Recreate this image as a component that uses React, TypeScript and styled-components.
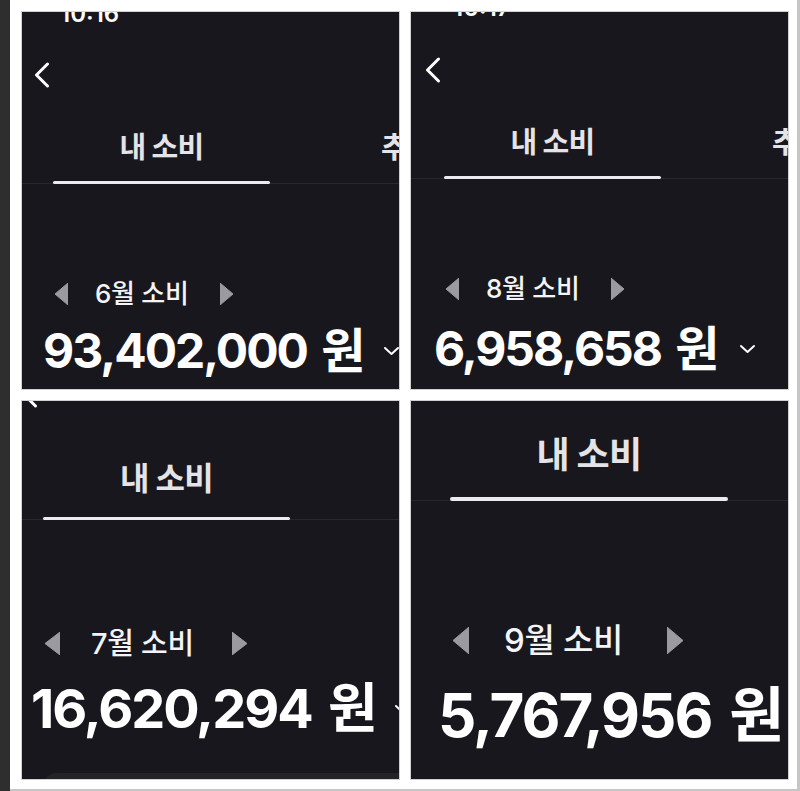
import React from 'react';
import styled, { createGlobalStyle } from 'styled-components';

const GlobalStyle = createGlobalStyle`
  body {
    margin: 0;
    background: #c6c6c6;
    font-family: "Inter", "Noto Sans CJK KR", sans-serif;
  }
`;

const Page = styled.div`
  display: flex;
  width: 800px;
  height: 791px;
  overflow: hidden;
`;

const Strip = styled.div`
  width: 10px;
  flex-shrink: 0;
  background: #2e2e2e;
`;

const Sheet = styled.div`
  width: 787px;
  height: 789px;
  box-sizing: border-box;
  padding: 12px 0 0 12px;
  background: #ffffff;
  display: grid;
  grid-template-columns: 377px 377px;
  grid-template-rows: 377px 378px;
  gap: 12px;
  align-content: start;
`;

const Panel = styled.div`
  background: #18171d;
  overflow: hidden;
  display: flex;
  flex-direction: column;
  align-items: flex-start;
  box-shadow: 0 0 0 1px rgba(0, 0, 0, 0.18);
`;

const StatusTime = styled.div<{ $top: number; $left: number; $size: number }>`
  margin-top: ${p => p.$top}px;
  padding-left: ${p => p.$left}px;
  font-family: "Inter", sans-serif;
  font-weight: 600;
  font-size: ${p => p.$size}px;
  line-height: 1;
  color: #ffffff;
  flex-shrink: 0;
`;

const BackButton = styled.div<{ $top: number; $left: number }>`
  margin-top: ${p => p.$top}px;
  margin-left: ${p => p.$left}px;
  width: 16px;
  height: 26px;
  flex-shrink: 0;
  svg {
    display: block;
  }
`;

const TabBar = styled.div<{ $top: number }>`
  align-self: stretch;
  display: flex;
  align-items: flex-end;
  margin-top: ${p => p.$top}px;
  border-bottom: 1px solid #28272d;
  flex-shrink: 0;
  white-space: nowrap;
`;

const Tab = styled.div<{ $left: number; $width: number }>`
  display: flex;
  flex-direction: column;
  align-items: center;
  width: ${p => p.$width}px;
  margin-left: ${p => p.$left}px;
  flex-shrink: 0;
`;

const TabLabel = styled.div<{ $size: number; $ls: number; $left?: number }>`
  font-family: "Noto Sans CJK KR", sans-serif;
  font-weight: 700;
  font-size: ${p => p.$size}px;
  line-height: 1;
  letter-spacing: ${p => p.$ls}px;
  color: #e4e4e8;
  white-space: nowrap;
  flex-shrink: 0;
  ${p => (p.$left !== undefined ? `margin-left: ${p.$left}px; align-self: flex-start;` : '')}
`;

const Underline = styled.div<{ $gap: number; $thick: number }>`
  width: 100%;
  height: ${p => p.$thick}px;
  margin-top: ${p => p.$gap}px;
  margin-bottom: -1px;
  border-radius: 2px;
  background: #ebebef;
`;

const MonthRow = styled.div<{ $top: number; $left: number; $height: number }>`
  display: flex;
  align-items: center;
  height: ${p => p.$height}px;
  margin-top: ${p => p.$top}px;
  margin-left: ${p => p.$left}px;
  flex-shrink: 0;
  white-space: nowrap;
  svg {
    display: block;
    flex-shrink: 0;
  }
`;

const MonthLabel = styled.div<{ $size: number; $gap1: number; $gap2: number }>`
  font-family: "Inter", "Noto Sans CJK KR", sans-serif;
  font-weight: 500;
  font-size: ${p => p.$size}px;
  line-height: 1;
  letter-spacing: -0.3px;
  color: #f4f4f6;
  margin: 0 ${p => p.$gap2}px 0 ${p => p.$gap1}px;
`;

const AmountRow = styled.div<{ $top: number; $left: number }>`
  display: flex;
  align-items: center;
  margin-top: ${p => p.$top}px;
  margin-left: ${p => p.$left}px;
  flex-shrink: 0;
  white-space: nowrap;
  svg {
    display: block;
    flex-shrink: 0;
  }
`;

const Amount = styled.div<{ $size: number }>`
  font-family: "Inter", "Noto Sans CJK KR", sans-serif;
  font-weight: 700;
  font-size: ${p => p.$size}px;
  line-height: 1;
  letter-spacing: -2px;
  color: #ffffff;
`;

const Won = styled.span`
  margin-left: 0.3em;
  letter-spacing: 0;
`;

const Caret = styled.div<{ $gap: number }>`
  margin-left: ${p => p.$gap}px;
`;

const BottomCard = styled.div<{ $top: number; $left: number }>`
  align-self: stretch;
  height: 40px;
  margin-top: ${p => p.$top}px;
  margin-left: ${p => p.$left}px;
  border-radius: 18px 0 0 0;
  background: #242328;
  flex-shrink: 0;
`;

type Spec = {
  time?: { text: string; top: number; left: number; size: number };
  back?: { top: number; left: number };
  tab: { top: number; left: number; width: number; size: number; ls: number; gap: number; thick: number; second: number };
  month: { top: number; left: number; height: number; size: number; tw: number; th: number; gap1: number; gap2: number; label: string };
  amount: { top: number; left: number; size: number; value: string; caretGap: number };
  card?: { top: number; left: number };
};

const panels: Spec[] = [
  {
    time: { text: '10:16', top: -10, left: 38, size: 24 },
    back: { top: 36, left: 12 },
    tab: { top: 43, left: 31, width: 217, size: 29, ls: -0.6, gap: 21, thick: 3, second: 111 },
    month: { top: 95, left: 33, height: 30, size: 26, tw: 13, th: 22, gap1: 27, gap2: 31, label: '6월 소비' },
    amount: { top: 18, left: 21, size: 48, value: '93,402,000', caretGap: 17 },
  },
  {
    time: { text: '10:17', top: -16, left: 42, size: 24 },
    back: { top: 37, left: 14 },
    tab: { top: 43, left: 33, width: 217, size: 29, ls: -0.6, gap: 21, thick: 3, second: 111 },
    month: { top: 95, left: 35, height: 30, size: 26, tw: 13, th: 22, gap1: 27, gap2: 31, label: '8월 소비' },
    amount: { top: 21, left: 23, size: 48, value: '6,958,658', caretGap: 19 },
  },
  {
    back: { top: -19, left: 0 },
    tab: { top: 52, left: 21, width: 247, size: 32, ls: -0.6, gap: 25, thick: 3, second: 124 },
    month: { top: 107, left: 23, height: 33, size: 29, tw: 15, th: 23, gap1: 31, gap2: 38, label: '7월 소비' },
    amount: { top: 22, left: 9, size: 54, value: '16,620,294', caretGap: 16 },
    card: { top: 37, left: 18 },
  },
  {
    tab: { top: 33, left: 39, width: 278, size: 36, ls: -0.6, gap: 27, thick: 4, second: 139 },
    month: { top: 121, left: 42, height: 37, size: 33, tw: 16, th: 27, gap1: 35, gap2: 44, label: '9월 소비' },
    amount: { top: 26, left: 27, size: 60, value: '5,767,956', caretGap: 26 },
  },
];

const BackIcon = () => (
  <svg width="16" height="26" viewBox="0 0 16 26">
    <path d="M13.5 2 L2.5 13 L13.5 24" stroke="#ffffff" strokeWidth="3" fill="none" strokeLinecap="round" strokeLinejoin="round" />
  </svg>
);

const Triangle = ({ w, h, dir }: { w: number; h: number; dir: 'left' | 'right' }) => (
  <svg width={w} height={h} viewBox={`0 0 ${w} ${h}`}>
    <path
      d={dir === 'left' ? `M${w} 0 L0 ${h / 2} L${w} ${h} Z` : `M0 0 L${w} ${h / 2} L0 ${h} Z`}
      fill="#9a9aa0"
      stroke="#9a9aa0"
      strokeWidth="1"
      strokeLinejoin="round"
    />
  </svg>
);

const CaretDown = () => (
  <svg width="17" height="10" viewBox="0 0 17 10">
    <path d="M2 2 L8.5 8 L15 2" stroke="#ffffff" strokeWidth="2" fill="none" strokeLinecap="round" strokeLinejoin="round" />
  </svg>
);

const SpendPanel: React.FC<{ spec: Spec }> = ({ spec }) => {
  const { time, back, tab, month, amount, card } = spec;
  return (
    <Panel>
      {time && (
        <StatusTime $top={time.top} $left={time.left} $size={time.size}>
          {time.text}
        </StatusTime>
      )}
      {back && (
        <BackButton $top={back.top} $left={back.left}>
          <BackIcon />
        </BackButton>
      )}
      <TabBar $top={tab.top}>
        <Tab $left={tab.left} $width={tab.width}>
          <TabLabel $size={tab.size} $ls={tab.ls}>내 소비</TabLabel>
          <Underline $gap={tab.gap} $thick={tab.thick} />
        </Tab>
        <TabLabel $size={tab.size} $ls={tab.ls} $left={tab.second}>
          추이
        </TabLabel>
      </TabBar>
      <MonthRow $top={month.top} $left={month.left} $height={month.height}>
        <Triangle w={month.tw} h={month.th} dir="left" />
        <MonthLabel $size={month.size} $gap1={month.gap1} $gap2={month.gap2}>
          {month.label}
        </MonthLabel>
        <Triangle w={month.tw} h={month.th} dir="right" />
      </MonthRow>
      <AmountRow $top={amount.top} $left={amount.left}>
        <Amount $size={amount.size}>
          {amount.value}
          <Won>원</Won>
        </Amount>
        <Caret $gap={amount.caretGap}>
          <CaretDown />
        </Caret>
      </AmountRow>
      {card && <BottomCard $top={card.top} $left={card.left} />}
    </Panel>
  );
};

const App: React.FC = () => (
  <>
    <GlobalStyle />
    <Page>
      <Strip />
      <Sheet>
        {panels.map((spec, i) => (
          <SpendPanel key={i} spec={spec} />
        ))}
      </Sheet>
    </Page>
  </>
);

export default App;
